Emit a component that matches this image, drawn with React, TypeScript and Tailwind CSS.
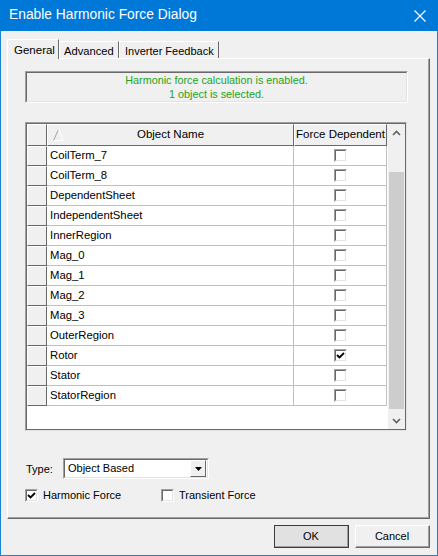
import React from "react"

const objects = [
  { name: "CoilTerm_7", checked: false },
  { name: "CoilTerm_8", checked: false },
  { name: "DependentSheet", checked: false },
  { name: "IndependentSheet", checked: false },
  { name: "InnerRegion", checked: false },
  { name: "Mag_0", checked: false },
  { name: "Mag_1", checked: false },
  { name: "Mag_2", checked: false },
  { name: "Mag_3", checked: false },
  { name: "OuterRegion", checked: false },
  { name: "Rotor", checked: true },
  { name: "Stator", checked: false },
  { name: "StatorRegion", checked: false },
]

function CheckBox({ checked }: { checked: boolean }) {
  return (
    <div className="w-[13px] h-[13px] shrink-0 border-t border-l border-[#a0a0a0] border-r border-b border-r-white border-b-white">
      <div className="w-full h-full bg-white border-t border-l border-[#696969] border-r border-b border-r-[#e3e3e3] border-b-[#e3e3e3] flex items-center justify-center">
        {checked && (
          <svg width="9" height="9" viewBox="0 0 9 9">
            <path d="M1 4 L3.5 6.5 L8 2" stroke="#000" strokeWidth="1.8" fill="none" />
          </svg>
        )}
      </div>
    </div>
  )
}

function Chevron({ up }: { up: boolean }) {
  return (
    <svg width="9" height="6" viewBox="0 0 9 6">
      <path d={up ? "M1 5 L4.5 1.5 L8 5" : "M1 1 L4.5 4.5 L8 1"} stroke="#606060" strokeWidth="1.6" fill="none" />
    </svg>
  )
}

export default function App() {
  return (
    <div className="w-[438px] h-[556px] bg-[#f0f0f0] border-x border-b border-[#1883d7] flex flex-col font-['Liberation_Sans',Arial,sans-serif] text-[11px] text-black select-none whitespace-nowrap">
      {/* Title bar */}
      <div className="h-[31px] -mx-px bg-[#0078d7] flex items-center justify-between pl-[9px] pr-[12px] shrink-0">
        <span className="text-white text-[13.8px]">Enable Harmonic Force Dialog</span>
        <svg width="12" height="12" viewBox="0 0 12 12">
          <path d="M0.5 0.5 L11.5 11.5 M11.5 0.5 L0.5 11.5" stroke="#fff" strokeWidth="1.2" />
        </svg>
      </div>

      {/* Tabs */}
      <div className="ml-[6px] mt-[8px] h-[19px] flex items-end">
        <div className="relative z-10 h-[20px] -mb-px w-[52px] bg-[#f0f0f0] border-t border-l border-white border-r border-r-[#696969] flex items-start pt-[2px] pl-[6px] text-[11.5px]">
          General
        </div>
        <div className="h-[17px] w-[60px] border-t border-l border-white border-r border-r-[#696969] flex items-start pt-[1px] pl-[4px] text-[11.2px]">
          Advanced
        </div>
        <div className="h-[17px] w-[100px] border-t border-l border-white border-r border-r-[#696969] flex items-start pt-[1px] pl-[5px] text-[11px]">
          Inverter Feedback
        </div>
      </div>

      {/* Tab panel */}
      <div className="ml-[6px] w-[423px] h-[461px] border-t border-l border-white border-r border-b border-r-[#696969] border-b-[#696969]">
        <div className="h-full border-r border-b border-[#a0a0a0] flex flex-col pl-[17px]">
          {/* Status */}
          <div className="mt-[12px] w-[383px] h-[32px] border-t border-l border-[#a0a0a0] border-r border-b border-r-white border-b-white">
            <div className="h-full border-t border-l border-[#696969] border-r border-b border-r-[#e3e3e3] border-b-[#e3e3e3] flex flex-col items-center justify-center text-[#1aa51a] leading-[14px] text-[10.8px]">
              <span>Harmonic force calculation is enabled.</span>
              <span>1 object is selected.</span>
            </div>
          </div>

          {/* Grid */}
          <div className="mt-[19px] w-[382px] h-[309px] border-t border-l border-[#a0a0a0] border-r border-b border-r-[#e3e3e3] border-b-[#e3e3e3]">
            <div className="h-full border border-[#696969] bg-white flex">
              <div className="flex-1 flex flex-col">
                {/* Header */}
                <div className="grid grid-cols-[20px_247px_93px] h-[22px] bg-[#f0f0f0]">
                  <div className="border-t border-l border-white border-r border-b border-r-[#696969] border-b-[#696969]" />
                  <div className="relative border-t border-l border-white border-r border-b border-r-[#696969] border-b-[#696969] flex items-center justify-center text-[11.5px]">
                    <svg className="absolute left-[5px] top-[4px]" width="11" height="12" viewBox="0 0 11 12">
                      <path d="M0.5 11.5 L5.5 0.5" stroke="#a0a0a0" strokeWidth="1" fill="none" />
                      <path d="M5.5 0.5 L10.5 11.5 L0.5 11.5" stroke="#ffffff" strokeWidth="1" fill="none" />
                    </svg>
                    Object Name
                  </div>
                  <div className="border-t border-l border-white border-r border-b border-r-[#696969] border-b-[#696969] flex items-center justify-center text-[11.5px]">
                    Force Dependent
                  </div>
                </div>
                {/* Rows */}
                {objects.map((o) => (
                  <div key={o.name} className="grid grid-cols-[20px_247px_93px] h-[20px]">
                    <div className="bg-[#f0f0f0] border-t border-l border-white border-r border-b border-r-[#696969] border-b-[#696969]" />
                    <div className="border-r border-b border-[#c0c0c0] pl-[3px] flex items-center text-[11.3px]">{o.name}</div>
                    <div className="border-r border-b border-[#c0c0c0] flex items-center justify-center">
                      <CheckBox checked={o.checked} />
                    </div>
                  </div>
                ))}
              </div>
              {/* Scrollbar */}
              <div className="w-[17px] bg-[#f0f0f0] flex flex-col">
                <div className="h-[17px] flex items-center justify-center">
                  <Chevron up />
                </div>
                <div className="flex-1 flex flex-col pt-[31px] pb-[3px] px-px">
                  <div className="flex-1 bg-[#cdcdcd]" />
                </div>
                <div className="h-[17px] flex items-center justify-center">
                  <Chevron up={false} />
                </div>
              </div>
            </div>
          </div>

          {/* Type */}
          <div className="mt-[27px] flex items-start">
            <span className="w-[38px] pl-px mt-[3px]">Type:</span>
            <div className="w-[146px] h-[21px] border-t border-l border-[#a0a0a0] border-r border-b border-r-white border-b-white">
              <div className="h-full bg-white border-t border-l border-[#696969] border-r border-b border-r-[#e3e3e3] border-b-[#e3e3e3] flex items-center justify-between pl-[3px] pr-px">
                <span>Object Based</span>
                <div className="w-[16px] h-[17px] bg-[#f0f0f0] border-t border-l border-white border-r border-b border-r-[#696969] border-b-[#696969] flex items-center justify-center">
                  <svg width="7" height="4" viewBox="0 0 7 4">
                    <path d="M0 0 L7 0 L3.5 4 Z" fill="#000" />
                  </svg>
                </div>
              </div>
            </div>
          </div>

          {/* Checkboxes */}
          <div className="mt-[8px] flex items-center">
            <div className="w-[136px] flex items-center gap-[5px]">
              <CheckBox checked />
              <span>Harmonic Force</span>
            </div>
            <div className="flex items-center gap-[5px]">
              <CheckBox checked={false} />
              <span>Transient Force</span>
            </div>
          </div>
        </div>
      </div>

      {/* Buttons */}
      <div className="mt-[6px] flex justify-end gap-[6px] pr-[7px]">
        <button className="w-[75px] h-[23px] border border-[#3c3c3c] bg-[#e1e1e1]">
          <div className="h-full border-r border-b border-[#a0a0a0] flex items-center justify-center">OK</div>
        </button>
        <button className="w-[75px] h-[23px] border-t border-l border-white border-r border-b border-r-[#696969] border-b-[#696969] bg-[#f0f0f0]">
          <div className="h-full border-r border-b border-[#a0a0a0] flex items-center justify-center">Cancel</div>
        </button>
      </div>
    </div>
  )
}
